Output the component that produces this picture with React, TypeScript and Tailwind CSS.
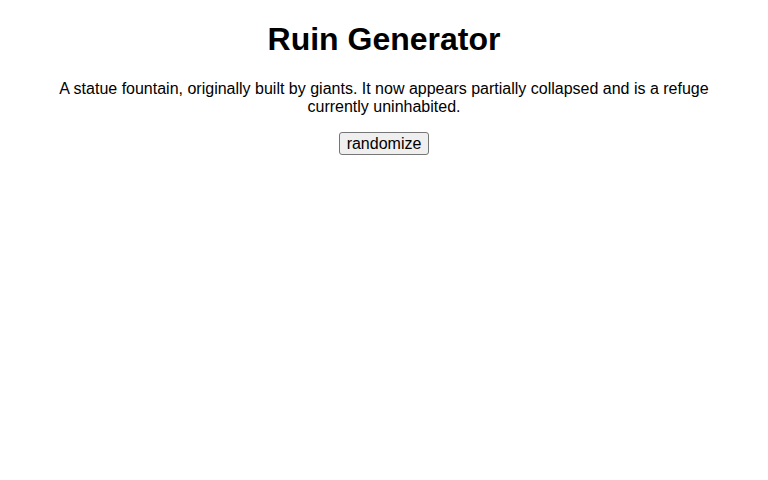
export default function App() {
  return (
    <div className="text-center text-black bg-white min-h-screen" style={{ fontFamily: '"Liberation Sans", Arial, sans-serif' }}>
      <div className="max-w-[680px] mx-auto pt-[21px]">
        <h1 className="text-[32px] font-bold leading-[37px] mb-[22px]">Ruin Generator</h1>
        <p className="text-base leading-[18px] mb-4">
          A statue fountain, originally built by giants. It now appears partially collapsed and is a refuge currently uninhabited.
        </p>
        <button className="text-base leading-[19px] px-[7px] py-[1px] bg-[#efefef] border border-[#767676] rounded-[3px] text-black">
          randomize
        </button>
      </div>
    </div>
  );
}
